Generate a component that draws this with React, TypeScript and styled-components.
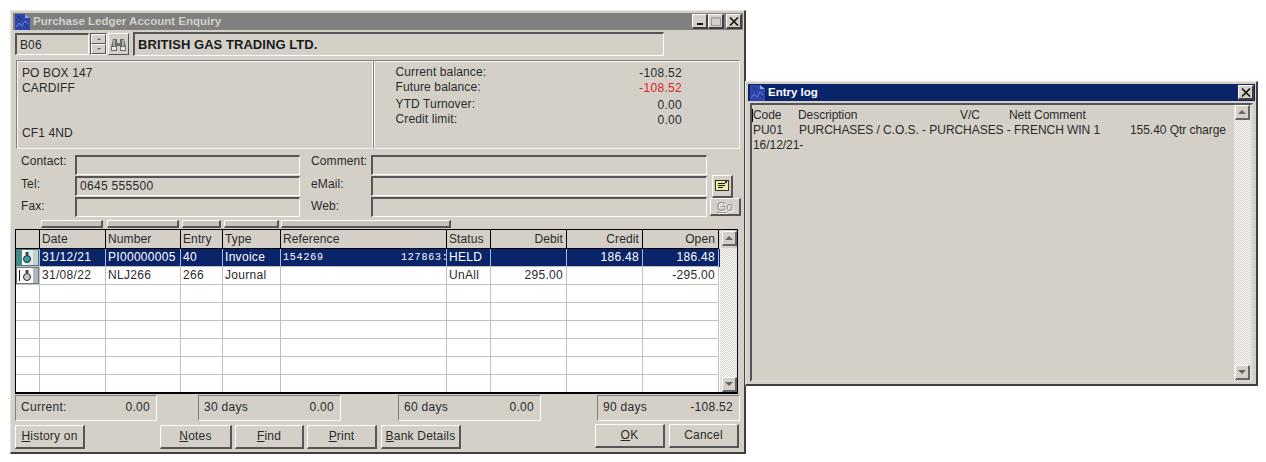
import styled, { createGlobalStyle, css } from "styled-components";

const Global = createGlobalStyle`
  html, body { margin: 0; padding: 0; background: #fff; }
  body { width: 1266px; height: 462px; overflow: hidden; font-family: "Liberation Sans", Arial, sans-serif; }
`;

const face = "#d4d0c8";
const ink = "#2a2a2a";

const sunken = css`
  border-style: solid;
  border-width: 2px 1px 1px 2px;
  border-color: #555 #fff #fff #555;
`;
const raised = css`
  border-style: solid;
  border-width: 1px 2px 2px 1px;
  border-color: #fff #555 #555 #fff;
`;

const Desktop = styled.div`
  position: relative;
  width: 1266px;
  height: 462px;
  font-size: 12px;
  letter-spacing: 0.12px;
  color: ${ink};
`;

const Win = styled.div<{ $x: number; $y: number; $w: number; $h: number; $z?: number }>`
  position: absolute;
  left: ${(p) => p.$x}px;
  top: ${(p) => p.$y}px;
  width: ${(p) => p.$w}px;
  height: ${(p) => p.$h}px;
  z-index: ${(p) => p.$z ?? 1};
  box-sizing: border-box;
  background: ${face};
  border-style: solid;
  border-width: 1px 2px 2px 1px;
  border-color: #e8e6e0 #404040 #404040 #e8e6e0;
  padding: 2px 1px 0 2px;
  display: flex;
  flex-direction: column;
`;

const TitleBar = styled.div<{ $active?: boolean }>`
  height: 17px;
  flex: none;
  display: flex;
  align-items: center;
  gap: 2px;
  padding: 0 1px 0 1px;
  background: ${(p) => (p.$active ? "#0a246a" : "#808080")};
  color: ${(p) => (p.$active ? "#fff" : face)};
  font-weight: bold;
  font-size: 11.5px;
  letter-spacing: 0;
`;

const TitleText = styled.span`
  flex: 1;
  padding-bottom: 2px;
`;

const WinBtn = styled.div<{ $gap?: number }>`
  width: 16px;
  height: 15px;
  box-sizing: border-box;
  ${raised}
  border-color: #fff #404040 #404040 #fff;
  background: ${face};
  margin-left: ${(p) => p.$gap ?? 0}px;
  display: flex;
  align-items: center;
  justify-content: center;
`;

const WinBtns = styled.div`
  display: flex;
  gap: 0;
`;

const Body = styled.div`
  padding: 0 3px 0 0;
  display: flex;
  flex-direction: column;
`;

const ToolRow = styled.div`
  display: flex;
  align-items: flex-start;
  margin: 2px 0 0 2px;
  height: 24px;
`;

const CodeField = styled.div`
  ${sunken}
  box-sizing: border-box;
  width: 74px;
  height: 22px;
  margin-top: 1px;
  padding: 3px 0 0 3px;
  font-size: 12px;
`;

const Spin = styled.div`
  margin: 1px 0 0 1px;
  width: 17px;
  height: 22px;
  display: flex;
  flex-direction: column;
  box-sizing: border-box;
  ${sunken}
  border-width: 1px;
`;

const SpinPart = styled.div`
  flex: 1;
  ${raised}
  border-width: 1px;
  display: flex;
  align-items: center;
  justify-content: center;
`;

const FindBtn = styled.div`
  width: 21px;
  height: 22px;
  margin: 1px 4px 0 1px;
  box-sizing: border-box;
  ${raised}
  border-width: 1px;
  display: flex;
  align-items: center;
  justify-content: center;
`;

const NameField = styled.div`
  ${sunken}
  box-sizing: border-box;
  width: 531px;
  height: 24px;
  padding: 3px 0 0 3px;
  font-size: 13px;
  font-weight: bold;
  letter-spacing: 0.05px;
  color: #1a1a1a;
`;

const Panels = styled.div`
  display: flex;
  margin: 4px 0 0 3px;
  height: 89px;
`;

const Panel = styled.div<{ $w: number }>`
  width: ${(p) => p.$w}px;
  box-sizing: border-box;
  border: 1px solid #808080;
  border-right-color: #f4f4f4;
  border-bottom-color: #f4f4f4;
  box-shadow: inset 1px 1px 0 #f4f4f4;
  padding: 5px 5px;
`;

const AddressLine = styled.div`
  height: 15px;
  line-height: 15px;
`;

const BalanceRow = styled.div<{ $gap?: number }>`
  display: flex;
  justify-content: space-between;
  height: 15px;
  line-height: 15px;
  margin-top: ${(p) => p.$gap ?? 0}px;
  padding: 0 52px 0 17px;
`;

const BalanceLabel = styled.span`
  margin-top: -1px;
`;

const Amount = styled.span<{ $red?: boolean }>`
  letter-spacing: 0.3px;
  color: ${(p) => (p.$red ? "#e0202c" : "inherit")};
`;

const Contact = styled.div`
  display: grid;
  grid-template-columns: 54px 225px 11px 60px 336px 34px;
  grid-auto-rows: 21px;
  margin: 5px 0 0 8px;
  align-items: center;
`;

const FieldLabel = styled.div<{ $dy: number }>`
  margin-top: ${(p) => p.$dy}px;
`;

const TextField = styled.div`
  ${sunken}
  box-sizing: border-box;
  height: 20px;
  padding: 1px 0 0 3px;
  line-height: 15px;
  letter-spacing: 0.3px;
`;

const IconBtnCell = styled.div`
  display: flex;
  justify-content: flex-start;
  padding-left: 5px;
`;

const NoteBtn = styled.div`
  width: 21px;
  height: 23px;
  margin-top: 1px;
  box-sizing: border-box;
  ${raised}
  display: flex;
  align-items: center;
  justify-content: center;
`;

const GoBtn = styled.div`
  width: 31px;
  height: 18px;
  margin-left: 3px;
  box-sizing: border-box;
  ${raised}
  color: #909090;
  text-shadow: 1px 1px 0 #fff;
  text-align: center;
  line-height: 16px;
`;

const HandleRow = styled.div`
  display: flex;
  height: 8px;
  margin: 3px 0 0 28px;
`;

const Handle = styled.div<{ $w: number; $gap: number }>`
  width: ${(p) => p.$w}px;
  margin-right: ${(p) => p.$gap}px;
  box-sizing: border-box;
  border-style: solid;
  border-width: 1px 2px 2px 1px;
  border-color: #fff #555 #555 #fff;
  background: #c8c4bc;
`;

const Table = styled.div`
  margin: 1px 0 0 2px;
  height: 165px;
  width: 723px;
  box-sizing: border-box;
  border: 1px solid #000;
  border-width: 1px 1px 2px 1px;
  display: flex;
  background: #fff;
`;

const Rows = styled.div`
  width: 704px;
  flex: none;
  overflow: hidden;
`;

const columns = "24px 66px 75px 42px 58px 166px 44px 76px 76px 76px";

const Row = styled.div<{ $head?: boolean; $selected?: boolean }>`
  display: grid;
  grid-template-columns: ${columns};
  height: ${(p) => (p.$head ? "19px" : "18px")};
  background: ${(p) => (p.$head ? face : p.$selected ? "#0a246a" : "#fff")};
  color: ${(p) => (p.$selected ? "#fff" : ink)};
`;

const Cell = styled.div<{ $right?: boolean; $head?: boolean; $selected?: boolean }>`
  box-sizing: border-box;
  padding: 0 ${(p) => (p.$right ? 3 : 2)}px 0 2px;
  line-height: ${(p) => (p.$head ? 18 : 17)}px;
  letter-spacing: ${(p) => (p.$head ? 0.12 : 0.3)}px;
  white-space: nowrap;
  overflow: hidden;
  text-align: ${(p) => (p.$right ? "right" : "left")};
  border-right: 1px solid ${(p) => (p.$head ? "#000" : p.$selected ? "#a8b8e0" : "#c0c0c0")};
  border-bottom: 1px solid ${(p) => (p.$head ? "#000" : "#c0c0c0")};
`;

const RefCell = styled(Cell)`
  display: flex;
  font-family: "Liberation Mono", monospace;
  font-size: 10px;
  letter-spacing: 0.8px;
  padding-right: 0;
`;

const RefStart = styled.span`
  width: 118px;
  flex: none;
`;

const IndicatorCell = styled(Cell)`
  padding: 0;
  display: flex;
  align-items: center;
  justify-content: center;
`;

const ScrollBar = styled.div`
  flex: 1;
  display: flex;
  flex-direction: column;
  align-items: center;
  padding-left: 1px;
  background-color: #fff;
  background-image: conic-gradient(${face} 25%, #fff 0 50%, ${face} 0 75%, #fff 0);
  background-size: 2px 2px;
`;

const ScrollHead = styled.div`
  align-self: stretch;
  background: ${face};
  display: flex;
  justify-content: center;
  padding: 1px 0 2px;
`;

const ScrollBtn = styled.div`
  width: 15px;
  height: 15px;
  box-sizing: border-box;
  background: ${face};
  ${raised}
  border-width: 1px 2px 2px 1px;
  border-color: #fff #666 #666 #fff;
  display: flex;
  align-items: center;
  justify-content: center;
`;

const Spacer = styled.div`
  flex: 1;
`;

const Arrow = styled.div<{ $down?: boolean; $small?: boolean }>`
  width: 0;
  height: 0;
  border-left: ${(p) => (p.$small ? 2 : 4)}px solid transparent;
  border-right: ${(p) => (p.$small ? 2 : 4)}px solid transparent;
  ${(p) =>
    p.$down
      ? css`border-top: ${p.$small ? 2 : 4}px solid #666;`
      : css`border-bottom: ${p.$small ? 2 : 4}px solid #666;`}
`;

const SummaryRow = styled.div`
  display: flex;
  margin: 1px 0 0 2px;
  height: 26px;
`;

const Summary = styled.div<{ $w: number; $gap: number }>`
  width: ${(p) => p.$w}px;
  margin-right: ${(p) => p.$gap}px;
  box-sizing: border-box;
  border: 1px solid #808080;
  border-right-color: #fff;
  border-bottom-color: #fff;
  display: flex;
  justify-content: space-between;
  padding: 0 6px 0 5px;
  line-height: 23px;
  letter-spacing: 0.3px;
`;

const ButtonRow = styled.div`
  display: flex;
  margin: 4px 0 0 2px;
`;

const Button = styled.div<{ $w: number; $gap?: number; $up?: boolean }>`
  width: ${(p) => p.$w}px;
  height: 24px;
  margin-right: ${(p) => p.$gap ?? 3}px;
  margin-top: ${(p) => (p.$up ? -1 : 0)}px;
  box-sizing: border-box;
  ${raised}
  text-align: center;
  line-height: 20px;
  letter-spacing: 0.2px;
  u { text-underline-offset: 1px; }
`;

const LogBody = styled.div`
  ${sunken}
  border-width: 2px;
  border-color: #555 #d8d8d8 #d8d8d8 #555;
  margin: 2px;
  flex: 1;
  display: flex;
  min-height: 0;
`;

const LogText = styled.div`
  flex: 1;
  padding: 3px 0 0 1px;
  position: relative;
  letter-spacing: -0.05px;
`;

const LogLine = styled.div`
  display: flex;
  height: 15px;
  line-height: 15px;
  white-space: nowrap;
`;

const LogCol = styled.span<{ $w: number }>`
  width: ${(p) => p.$w}px;
`;

const Caret = styled.div`
  position: absolute;
  left: 0;
  top: 4px;
  width: 1px;
  height: 13px;
  background: #000;
`;

const LogScroll = styled.div`
  width: 17px;
  flex: none;
  display: flex;
  flex-direction: column;
  background-color: #fff;
  background-image: conic-gradient(${face} 25%, #fff 0 50%, ${face} 0 75%, #fff 0);
  background-size: 2px 2px;
  align-items: center;
`;

const AppIcon = () => (
  <svg width="17" height="16" viewBox="0 0 17 16">
    <path d="M1 0h10l5 4v12H1z" fill="#2f46a8" />
    <path d="M11 0l5 4h-5z" fill="#9aa4d8" />
    <path d="M2 13l3-4 3 3 3-5 3 3" stroke="#6f80dc" fill="none" />
    <path d="M4 2l4 4M10 9l4 4" stroke="#1a2a80" fill="none" />
  </svg>
);

const Binoculars = () => (
  <svg width="17" height="15" viewBox="0 0 17 15">
    <path d="M3 2h4v4h3V2h4l2 8v4h-6v-5H7v5H1v-4z" fill="#6b6b6b" />
    <rect x="2" y="10" width="4" height="3" fill="#e8e8e8" />
    <rect x="11" y="10" width="4" height="3" fill="#e8e8e8" />
    <path d="M4 3v6M13 3v6" stroke="#eee" />
  </svg>
);

const NoteIcon = () => (
  <svg width="14" height="11" viewBox="0 0 14 11">
    <rect x="0.5" y="0.5" width="13" height="10" fill="#f0ec98" stroke="#333" />
    <path d="M3 3.5h7M3 5.5h7M3 7.5h5" stroke="#111" />
    <rect x="10" y="1" width="2" height="2" fill="#222" />
  </svg>
);

const RowMark = ({ selected }: { selected?: boolean }) => (
  <svg width="23" height="17" viewBox="0 0 23 17">
    <rect x="0.5" y="0.5" width="22" height="16" fill={selected ? "#dfeaea" : "#fff"} stroke={selected ? "#4a7c7c" : "#777"} />
    {selected ? (
      <rect x="1" y="1" width="5" height="15" fill="#3f8c8c" />
    ) : (
      <rect x="3" y="3" width="1" height="11" fill="#111" />
    )}
    <rect x="6" y="1" width="4" height="15" fill="#fff" />
    <circle cx="11" cy="10" r="3.5" fill={selected ? "#3aa0a0" : "#c8c8c8"} stroke="#222" />
    <path d="M9.5 3h3v3h-3z" fill="#444" />
    <rect x="17" y="1" width="5" height="15" fill={selected ? "#c4d0d0" : "#aab8c0"} />
  </svg>
);

const Close = () => (
  <svg width="10" height="9" viewBox="0 0 10 9">
    <path d="M1 0.5l8 8M9 0.5l-8 8" stroke="#111" strokeWidth="1.6" />
  </svg>
);

type Tx = { date: string; num: string; entry: string; type: string; status: string; debit: string; credit: string; open: string };

const txs: Tx[] = [
  { date: "31/12/21", num: "PI00000005", entry: "40", type: "Invoice", status: "HELD", debit: "", credit: "186.48", open: "186.48" },
  { date: "31/08/22", num: "NLJ266", entry: "266", type: "Journal", status: "UnAll", debit: "295.00", credit: "", open: "-295.00" },
];

const headers = ["", "Date", "Number", "Entry", "Type", "Reference", "Status", "Debit", "Credit", "Open"];

export default function App() {
  return (
    <Desktop>
      <Global />
      <Win $x={10} $y={10} $w={736} $h={444}>
        <TitleBar>
          <AppIcon />
          <TitleText>Purchase Ledger Account Enquiry</TitleText>
          <WinBtns>
            <WinBtn>
              <svg width="8" height="8" viewBox="0 0 8 8"><rect x="1" y="6" width="6" height="2" fill="#111" /></svg>
            </WinBtn>
            <WinBtn>
              <svg width="10" height="9" viewBox="0 0 10 9"><rect x="0.5" y="0.5" width="9" height="8" fill="none" stroke="#999" /><rect x="0" y="0" width="10" height="2" fill="#aaa" /></svg>
            </WinBtn>
            <WinBtn $gap={2}><Close /></WinBtn>
          </WinBtns>
        </TitleBar>
        <Body>
          <ToolRow>
            <CodeField>B06</CodeField>
            <Spin>
              <SpinPart><Arrow $small /></SpinPart>
              <SpinPart><Arrow $small $down /></SpinPart>
            </Spin>
            <FindBtn><Binoculars /></FindBtn>
            <NameField>BRITISH GAS TRADING LTD.</NameField>
          </ToolRow>
          <Panels>
            <Panel $w={357}>
              <AddressLine>PO BOX 147</AddressLine>
              <AddressLine>CARDIFF</AddressLine>
              <AddressLine />
              <AddressLine />
              <AddressLine>CF1 4ND</AddressLine>
            </Panel>
            <Panel $w={368}>
              <BalanceRow><BalanceLabel>Current balance:</BalanceLabel><Amount>-108.52</Amount></BalanceRow>
              <BalanceRow><BalanceLabel>Future balance:</BalanceLabel><Amount $red>-108.52</Amount></BalanceRow>
              <BalanceRow $gap={2}><BalanceLabel>YTD Turnover:</BalanceLabel><Amount>0.00</Amount></BalanceRow>
              <BalanceRow><BalanceLabel>Credit limit:</BalanceLabel><Amount>0.00</Amount></BalanceRow>
            </Panel>
          </Panels>
          <Contact>
            <FieldLabel $dy={-8}>Contact:</FieldLabel>
            <TextField />
            <span />
            <FieldLabel $dy={-8}>Comment:</FieldLabel>
            <TextField />
            <span />
            <FieldLabel $dy={-4}>Tel:</FieldLabel>
            <TextField>0645 555500</TextField>
            <span />
            <FieldLabel $dy={-4}>eMail:</FieldLabel>
            <TextField />
            <IconBtnCell><NoteBtn><NoteIcon /></NoteBtn></IconBtnCell>
            <FieldLabel $dy={-2}>Fax:</FieldLabel>
            <TextField />
            <span />
            <FieldLabel $dy={-2}>Web:</FieldLabel>
            <TextField />
            <GoBtn><u>G</u>o</GoBtn>
          </Contact>
          <HandleRow>
            <Handle $w={62} $gap={4} />
            <Handle $w={72} $gap={3} />
            <Handle $w={39} $gap={3} />
            <Handle $w={55} $gap={2} />
            <Handle $w={170} $gap={0} />
          </HandleRow>
          <Table>
            <Rows>
              <Row $head>
                {headers.map((h, i) => (
                  <Cell key={i} $head $right={i > 6}>{h}</Cell>
                ))}
              </Row>
              {txs.map((t, i) => {
                const sel = i === 0;
                return (
                  <Row key={t.num} $selected={sel}>
                    <IndicatorCell $selected={sel}><RowMark selected={sel} /></IndicatorCell>
                    <Cell $selected={sel}>{t.date}</Cell>
                    <Cell $selected={sel}>{t.num}</Cell>
                    <Cell $selected={sel}>{t.entry}</Cell>
                    <Cell $selected={sel}>{t.type}</Cell>
                    {sel ? (
                      <RefCell $selected>
                        <RefStart>154269</RefStart>
                        <span>127863:</span>
                      </RefCell>
                    ) : (
                      <Cell />
                    )}
                    <Cell $selected={sel}>{t.status}</Cell>
                    <Cell $selected={sel} $right>{t.debit}</Cell>
                    <Cell $selected={sel} $right>{t.credit}</Cell>
                    <Cell $selected={sel} $right>{t.open}</Cell>
                  </Row>
                );
              })}
              {[0, 1, 2, 3, 4, 5].map((r) => (
                <Row key={r}>
                  {headers.map((_, c) => (
                    <Cell key={c} />
                  ))}
                </Row>
              ))}
            </Rows>
            <ScrollBar>
              <ScrollHead>
                <ScrollBtn><Arrow /></ScrollBtn>
              </ScrollHead>
              <Spacer />
              <ScrollBtn><Arrow $down /></ScrollBtn>
            </ScrollBar>
          </Table>
          <SummaryRow>
            <Summary $w={142} $gap={41}><span>Current:</span><span>0.00</span></Summary>
            <Summary $w={143} $gap={57}><span>30 days</span><span>0.00</span></Summary>
            <Summary $w={143} $gap={56}><span>60 days</span><span>0.00</span></Summary>
            <Summary $w={143} $gap={0}><span>90 days</span><span>-108.52</span></Summary>
          </SummaryRow>
          <ButtonRow>
            <Button $w={70} $gap={75}><u>H</u>istory on</Button>
            <Button $w={72}><u>N</u>otes</Button>
            <Button $w={69}><u>F</u>ind</Button>
            <Button $w={70} $gap={4}><u>P</u>rint</Button>
            <Button $w={80} $gap={134}><u>B</u>ank Details</Button>
            <Button $w={70} $gap={4} $up><u>O</u>K</Button>
            <Button $w={70} $gap={0} $up>Cancel</Button>
          </ButtonRow>
        </Body>
      </Win>

      <Win $x={745} $y={81} $w={513} $h={305} $z={2}>
        <TitleBar $active>
          <AppIcon />
          <TitleText>Entry log</TitleText>
          <WinBtn><Close /></WinBtn>
        </TitleBar>
        <LogBody>
          <LogText>
            <Caret />
            <LogLine>
              <LogCol $w={45}>Code</LogCol>
              <LogCol $w={162}>Description</LogCol>
              <LogCol $w={49}>V/C</LogCol>
              <LogCol $w={120}>Nett Comment</LogCol>
            </LogLine>
            <LogLine>
              <LogCol $w={46}>PU01</LogCol>
              <LogCol $w={331}>PURCHASES / C.O.S. - PURCHASES - FRENCH WIN 1</LogCol>
              <LogCol $w={100}>155.40 Qtr charge</LogCol>
            </LogLine>
            <LogLine>16/12/21-</LogLine>
          </LogText>
          <LogScroll>
            <ScrollBtn><Arrow /></ScrollBtn>
            <Spacer />
            <ScrollBtn><Arrow $down /></ScrollBtn>
          </LogScroll>
        </LogBody>
      </Win>
    </Desktop>
  );
}
